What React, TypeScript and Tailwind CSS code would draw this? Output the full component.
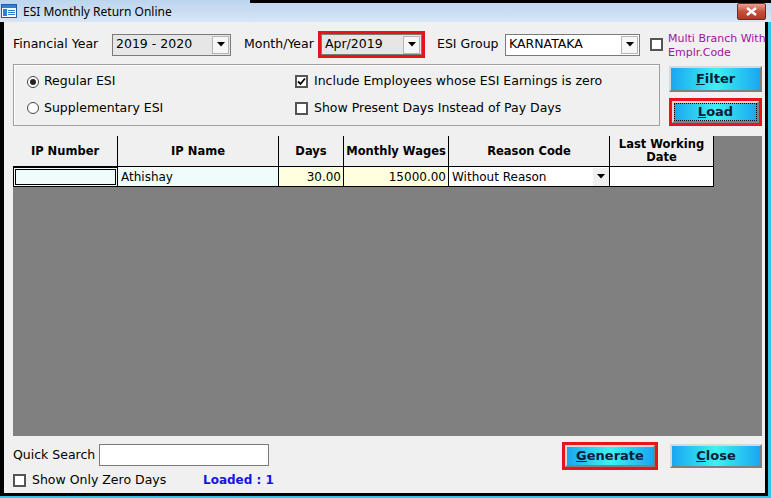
import React from "react"

const font = { fontFamily: '"DejaVu Sans", Verdana, sans-serif' }

function Arrow() {
  return (
    <svg width="8" height="5" viewBox="0 0 8 5">
      <path d="M0 0 L8 0 L4 4.5 Z" fill="#000" />
    </svg>
  )
}

function Combo({ value, width, height = 22, white = false }: { value: string; width: number; height?: number; white?: boolean }) {
  return (
    <div
      className={`flex shrink-0 items-center border border-[#7a7a7a] ${white ? "bg-white" : "bg-[#e6e6e6]"}`}
      style={{ width, height }}
    >
      <span className="flex-1 whitespace-nowrap pl-[3px] text-[12.5px] text-black">{value}</span>
      <div className="mr-[1px] flex h-[18px] w-[17px] items-center justify-center border border-[#b5b5b5] bg-[#f6f6f6]">
        <Arrow />
      </div>
    </div>
  )
}

function Check({ checked = false }: { checked?: boolean }) {
  return (
    <div className="flex h-[13px] w-[13px] shrink-0 items-center justify-center border-2 border-[#555] bg-white">
      {checked && (
        <svg width="9" height="9" viewBox="0 0 9 9">
          <path d="M1 4.5 L3.5 7 L8 1.5" stroke="#000" strokeWidth="1.8" fill="none" />
        </svg>
      )}
    </div>
  )
}

function Radio({ checked = false }: { checked?: boolean }) {
  return (
    <div className="flex h-[12px] w-[12px] shrink-0 items-center justify-center rounded-full border border-[#444] bg-white">
      {checked && <div className="h-[6px] w-[6px] rounded-full bg-[#222]" />}
    </div>
  )
}

function Btn({ label, width, height = 26, focus = false }: { label: string; width: number; height?: number; focus?: boolean }) {
  return (
    <div
      className="flex shrink-0 items-center justify-center border-2 border-t-[#d8d8d8] border-l-[#d8d8d8] border-r-[#808080] border-b-[#808080] bg-[linear-gradient(to_right,#1aa6f2,#3cf2f0_50%,#1aa6f2)]"
      style={{ width, height }}
    >
      <div
        className={`flex h-full w-full items-center justify-center ${focus ? "border border-dotted border-black" : ""}`}
      >
        <span className="whitespace-nowrap text-[13px] font-bold text-[#0b1d3a]">
          <span className="underline">{label[0]}</span>
          {label.slice(1)}
        </span>
      </div>
    </div>
  )
}

const cols = [
  { name: "IP Number", w: 105 },
  { name: "IP Name", w: 161 },
  { name: "Days", w: 65 },
  { name: "Monthly Wages", w: 105 },
  { name: "Reason Code", w: 161 },
  { name: "Last Working Date", w: 104 },
]

export default function App() {
  return (
    <div className="h-[498px] w-[771px] overflow-hidden bg-[#2fc6ea]" style={font}>
      <div className="flex h-[496px] w-[768px] flex-col bg-black">
        {/* title bar */}
        <div className="relative flex h-[22px] w-[771px] shrink-0 items-center bg-[linear-gradient(to_bottom,#bcd5ee,#d6e6f6)]">
          <div className="absolute left-[250px] right-0 top-0 h-[3px] bg-black" />
          <div className="ml-[1px] flex h-[14px] w-[16px] flex-col border border-[#1a5fb4] bg-white">
            <div className="h-[3px] bg-[#2f7fd8]" />
            <div className="flex flex-1 gap-[1px] p-[1px]">
              <div className="w-[4px] bg-[#2f7fd8]" />
              <div className="flex flex-1 flex-col justify-around">
                <div className="h-[1px] bg-[#2f7fd8]" />
                <div className="h-[1px] bg-[#2f7fd8]" />
                <div className="h-[1px] bg-[#2f7fd8]" />
              </div>
            </div>
          </div>
          <span className="ml-[6px] mt-[2px] text-[12px] text-black" style={{ fontFamily: '"Noto Sans", "Open Sans", sans-serif' }}>
            ESI Monthly Return Online
          </span>
          <div className="absolute right-[5px] top-[3px] flex h-[17px] w-[29px] items-center justify-center rounded-[2px] border border-[#6b2a22] bg-[linear-gradient(to_bottom,#e8a090,#c8503a_50%,#b03a28)]">
            <svg width="11" height="9" viewBox="0 0 11 9">
              <path d="M1 1 L10 8 M10 1 L1 8" stroke="#fff" strokeWidth="2.4" />
            </svg>
          </div>
        </div>

        {/* body */}
        <div className="ml-[4px] mr-[3px] flex h-[471px] shrink-0 flex-col bg-[#f0f0f0] pl-[9px] text-[12.5px] text-black">
          {/* row 1 */}
          <div className="mt-[9px] flex h-[27px] shrink-0 items-center">
            <span className="w-[99px] shrink-0 whitespace-nowrap">Financial Year</span>
            <Combo value="2019 - 2020" width={119} />
            <span className="ml-[13px] w-[74px] shrink-0 whitespace-nowrap">Month/Year</span>
            <div className="shrink-0 border-[3px] border-[#e8141c]">
              <Combo value="Apr/2019" width={101} height={21} />
            </div>
            <span className="ml-[12px] w-[68px] shrink-0 whitespace-nowrap">ESI Group</span>
            <Combo value="KARNATAKA" width={135} white />
            <div className="ml-[10px]">
              <Check />
            </div>
            <div className="ml-[5px] mt-[3px] whitespace-nowrap text-[11px] leading-[14px] text-[#a0129e]">
              Multi Branch With
              <br />
              Emplr.Code
            </div>
          </div>

          {/* row 2 */}
          <div className="mt-[6px] flex shrink-0">
            <div className="flex h-[62px] w-[647px] border border-[#a0a0a0] shadow-[inset_1px_1px_0_#fff]">
              <div className="ml-[13px] flex w-[268px] flex-col justify-center gap-[8px]">
                <div className="flex items-center gap-[5px]">
                  <Radio checked />
                  <span>Regular ESI</span>
                </div>
                <div className="flex items-center gap-[5px]">
                  <Radio />
                  <span>Supplementary ESI</span>
                </div>
              </div>
              <div className="flex flex-col justify-center gap-[8px]">
                <div className="flex items-center gap-[6px]">
                  <Check checked />
                  <span className="whitespace-nowrap">Include Employees whose ESI Earnings is zero</span>
                </div>
                <div className="flex items-center gap-[6px]">
                  <Check />
                  <span className="whitespace-nowrap">Show Present Days Instead of Pay Days</span>
                </div>
              </div>
            </div>
            <div className="ml-[9px] flex flex-col">
              <div className="mt-[2px]">
                <Btn label="Filter" width={93} />
              </div>
              <div className="mt-[6px] w-[93px] border-[3px] border-[#e8141c]">
                <Btn label="Load" width={87} height={22} focus />
              </div>
            </div>
          </div>

          {/* grid */}
          <div className="mt-[10px] h-[300px] w-[749px] shrink-0 bg-[#808080]">
            <div className="flex">
              {cols.map((c) => (
                <div
                  key={c.name}
                  className="flex h-[31px] items-center justify-center whitespace-nowrap border-r border-b border-black bg-[#f0f0f0] text-center text-[11.5px] font-bold leading-[13px]"
                  style={{ width: c.w }}
                >
                  {c.name === "Last Working Date" ? (
                    <span>
                      Last Working
                      <br />
                      Date
                    </span>
                  ) : (
                    c.name
                  )}
                </div>
              ))}
            </div>
            <div className="flex h-[20px] text-[12px]">
              <div className="w-[105px] border-double border-black bg-[#f0fcfc]" style={{ borderWidth: 3 }} />
              <div className="flex w-[161px] items-center border-b border-r border-black bg-[#f0fcfa] pl-[3px]">Athishay</div>
              <div className="flex w-[65px] items-center justify-end border-b border-r border-black bg-[#ffffe0] pr-[2px]">30.00</div>
              <div className="flex w-[105px] items-center justify-end border-b border-r border-black bg-[#ffffe0] pr-[2px]">15000.00</div>
              <div className="flex w-[161px] items-center border-b border-r border-black bg-white pl-[3px]">
                <span className="flex-1">Without Reason</span>
                <div className="flex h-[18px] w-[16px] items-center justify-center bg-[#f0f0f0]">
                  <Arrow />
                </div>
              </div>
              <div className="w-[104px] border-b border-r border-black bg-white" />
            </div>
          </div>

          {/* bottom */}
          <div className="mt-[8px] flex shrink-0">
            <div className="flex w-[256px] shrink-0 flex-col">
              <div className="flex h-[22px] items-center">
                <span className="w-[86px] whitespace-nowrap">Quick Search</span>
                <div className="h-[22px] w-[170px] border border-[#7a7a7a] bg-white" />
              </div>
              <div className="mt-[5px] flex items-center">
                <Check />
                <span className="ml-[6px] w-[171px] shrink-0 whitespace-nowrap">Show Only Zero Days</span>
                <span className="whitespace-nowrap text-[12px] font-bold text-[#1414e6]">Loaded : 1</span>
              </div>
            </div>
            <div className="ml-[293px] mt-[-2px] h-[28px] w-[96px] shrink-0 border-[3px] border-[#e8141c]">
              <Btn label="Generate" width={90} height={22} />
            </div>
            <div className="ml-[12px]">
              <Btn label="Close" width={92} height={24} />
            </div>
          </div>
        </div>
      </div>
    </div>
  )
}
